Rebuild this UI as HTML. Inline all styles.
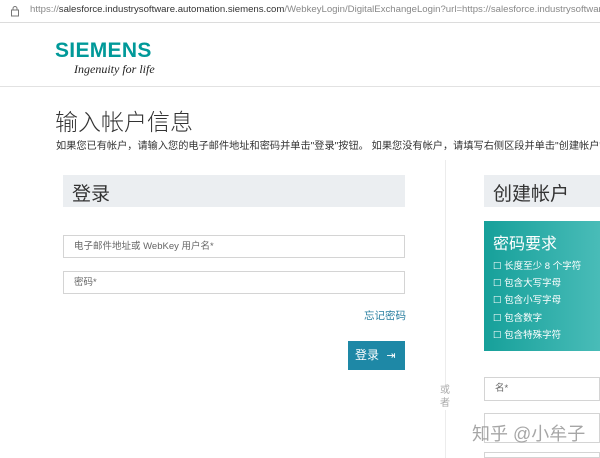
<!DOCTYPE html>
<html><head><meta charset="utf-8"><style>
*{margin:0;padding:0;box-sizing:border-box}
body{width:600px;height:458px;overflow:hidden;background:#fff;font-family:"Liberation Sans","Noto Sans CJK SC",sans-serif;position:relative;color:#333}
.a{position:absolute}
.inp{position:absolute;border:1px solid #d4d4d4;background:#fff;font-size:9.5px;color:#666;padding-left:10px;line-height:21px}
</style></head><body>
<div class="a" style="left:0;top:0;width:600px;height:23px;background:#fff;border-bottom:1px solid #dcdcdc"></div>
<svg class="a" style="left:10px;top:5px" width="10" height="12" viewBox="0 0 10 12"><rect x="1.5" y="5" width="7" height="6" fill="none" stroke="#777"/><path d="M3 5V3.5a2 2 0 0 1 4 0V5" fill="none" stroke="#777"/></svg>
<div class="a" style="left:30px;top:4px;width:570px;overflow:hidden;font-size:9.6px;color:#888;white-space:nowrap">https://<span style="color:#333">salesforce.industrysoftware.automation.siemens.com</span>/WebkeyLogin/DigitalExchangeLogin?url=https://salesforce.industrysoftware.aut</div>
<div class="a" style="left:0;top:86px;width:600px;height:1px;background:#e2e2e2"></div>
<div class="a" style="left:55px;top:39px;font-size:21px;font-weight:bold;color:#009999;letter-spacing:0.3px">SIEMENS</div>
<div class="a" style="left:74px;top:62px;font-size:12px;font-style:italic;color:#222;font-family:'Liberation Serif',serif">Ingenuity for life</div>
<div class="a" style="left:55px;top:103px;font-size:23px;color:#333;font-weight:300">输入帐户信息</div>
<div class="a" style="left:56px;top:137px;width:544px;overflow:hidden;font-size:10.2px;color:#333;white-space:nowrap">如果您已有帐户，请输入您的电子邮件地址和密码并单击"登录"按钮。 如果您没有帐户，请填写右侧区段并单击"创建帐户"按</div>
<div class="a" style="left:63px;top:175px;width:342px;height:32px;background:#ebeef1"></div>
<div class="a" style="left:72px;top:179px;font-size:19px;color:#333">登录</div>
<div class="inp" style="left:63px;top:235px;width:342px;height:23px">电子邮件地址或 WebKey 用户名*</div>
<div class="inp" style="left:63px;top:271px;width:342px;height:23px">密码*</div>
<div class="a" style="left:364px;top:308px;font-size:10.5px;color:#2a7fa0">忘记密码</div>
<div class="a" style="left:348px;top:341px;width:57px;height:29px;background:#1e88a6;color:#fff;font-size:12px;line-height:29px;padding-left:7px">登录 <span style="font-size:11px;margin-left:4px">⇥</span></div>
<div class="a" style="left:445px;top:160px;width:1px;height:298px;background:#ececec"></div>
<div class="a" style="left:439px;top:384px;width:12px;font-size:10px;color:#aaa;background:#fff;line-height:13px;text-align:center">或<br>者</div>
<div class="a" style="left:484px;top:175px;width:116px;height:32px;background:#ebeef1"></div>
<div class="a" style="left:493px;top:179px;font-size:19px;color:#333">创建帐户</div>
<div class="a" style="left:484px;top:221px;width:116px;height:130px;background:linear-gradient(90deg,#16a09a,#49bcb8)"></div>
<div class="a" style="left:493px;top:230px;font-size:16px;color:#fff">密码要求</div>
<div class="a" style="left:493px;top:258px;font-size:9.5px;color:#fff;line-height:17.2px">☐ 长度至少 8 个字符<br>☐ 包含大写字母<br>☐ 包含小写字母<br>☐ 包含数字<br>☐ 包含特殊字符</div>
<div class="inp" style="left:484px;top:377px;width:116px;height:24px">名*</div>
<div class="inp" style="left:484px;top:413px;width:116px;height:30px"></div>
<div class="inp" style="left:484px;top:452px;width:116px;height:6px"></div>
<div class="a" style="left:472px;top:420px;font-size:18px;color:rgba(150,150,150,0.85);white-space:nowrap">知乎 @小牟子</div>
</body></html>
